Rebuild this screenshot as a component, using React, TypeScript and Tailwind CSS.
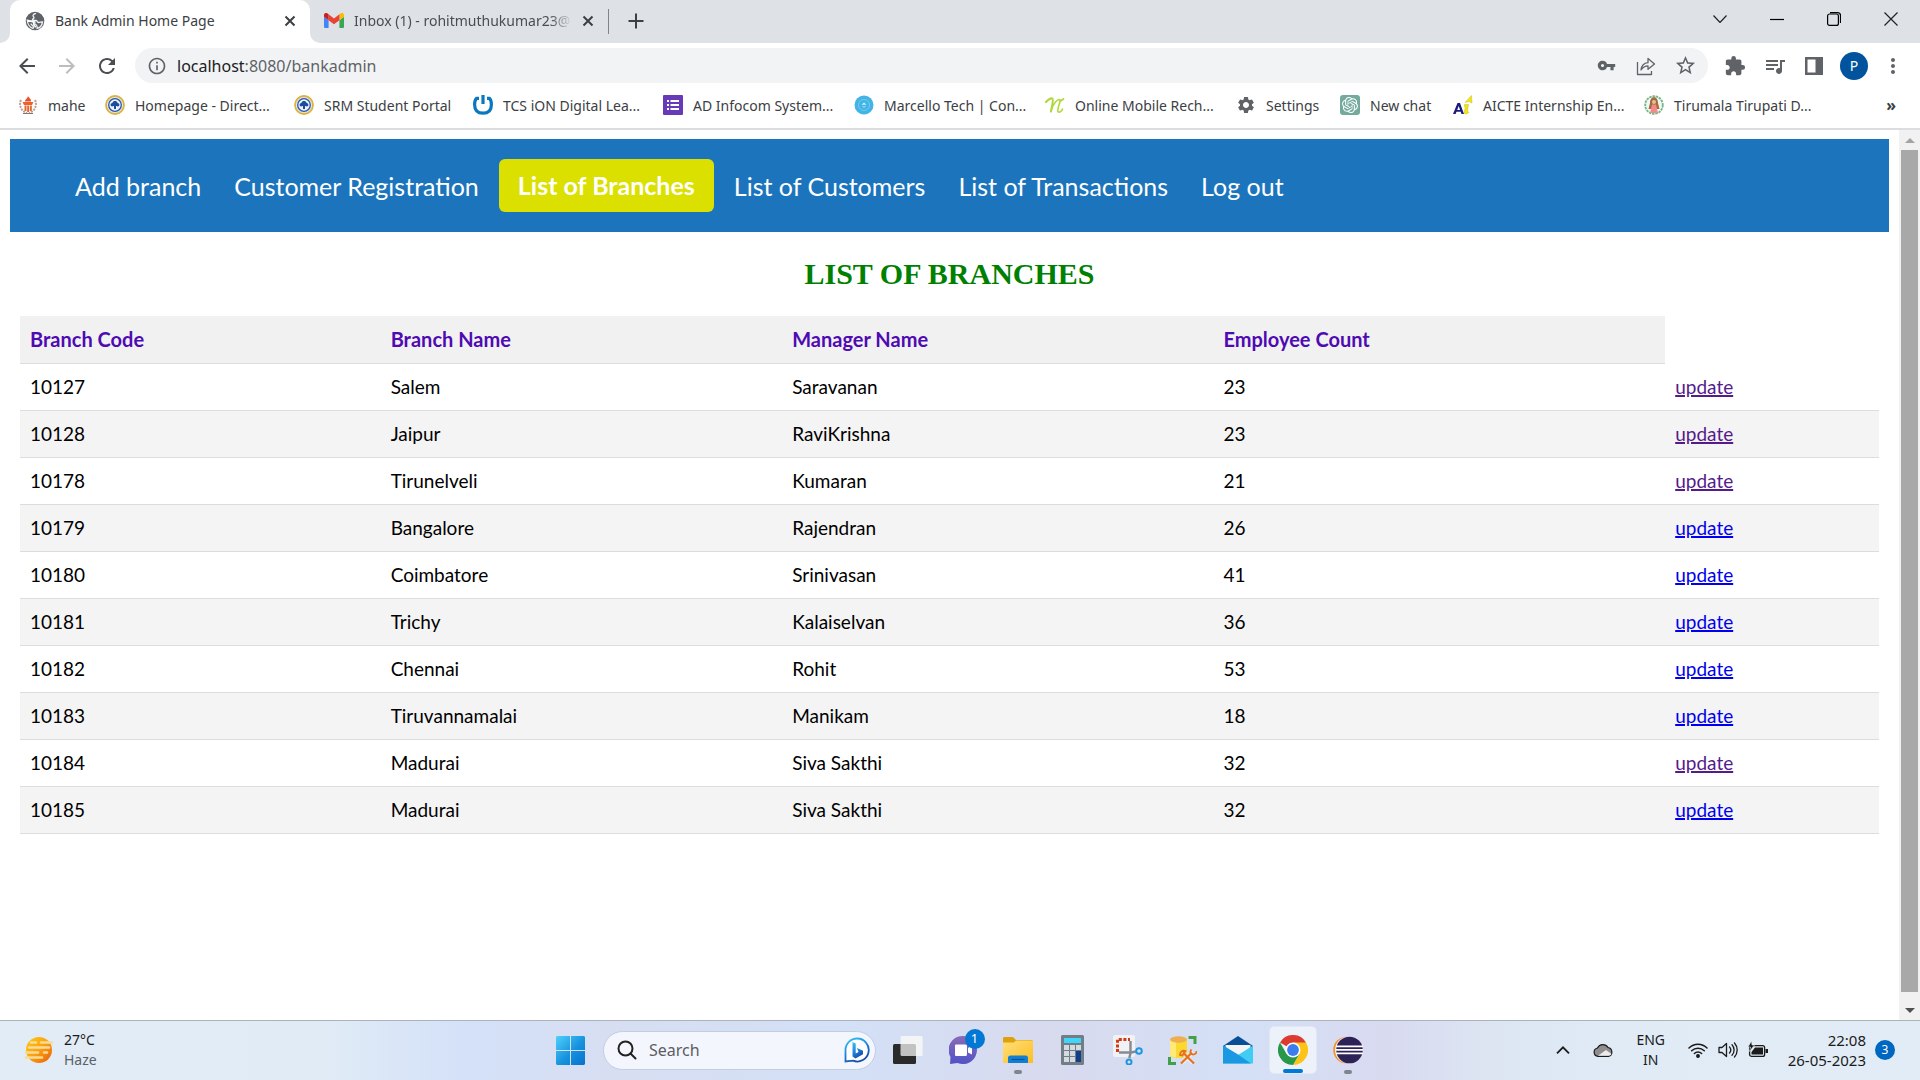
import type { ReactNode } from "react";
import {
  MdArrowBack,
  MdArrowForward,
  MdExtension,
  MdMoreVert,
  MdOutlineInfo,
  MdQueueMusic,
  MdRefresh,
  MdSettings,
  MdStarBorder,
  MdVpnKey,
} from "react-icons/md";
import { SiOpenai } from "react-icons/si";

/* ---------- Browser chrome ---------- */

function GlobeIcon() {
  return (
    <svg viewBox="0 0 20 20" className="size-5">
      <circle cx="10" cy="10" r="9.300" fill="#5f6368" />
      <path
        d="M11 2.200c-1 .6-2.800 1-3 2.300-.1 1 1 1.300 1 2.300 0 .8-1.500.8-1.500 1.700 0 1.200 2 .8 3.500 1 1.500.3 1.300 1.800 2.500 2 1.300.2 2.500-.8 4-.7-.4 3-2.500 5.800-5.300 6.600.4-1.200-.3-1.800-.5-2.700-.2-1-1.200-.8-1.700-1.700-.4-.8.300-1.500-.2-2.200C8.800 9.700 5 10.500 2.300 9.200 2.500 13 5 16.500 8 17.500c.8-.6.500-1.500.200-2.300-.4-1-2-1.200-2.300-2.500"
        fill="none"
        stroke="#f1f3f4"
        strokeWidth="1.300"
      />
      <path d="M11.500 3c2 .2 4.800 2.200 5.500 5-1.200.8-2.700.3-3.500-.5s-.5-1.700-1.500-2.300-1-1.500-.5-2.200z" fill="#5f6368" />
      <path d="M3 10c2 .5 4.500-.3 5.500 1.200.6 1-.2 1.800.5 2.800s1.500 1.200 1.300 2.500" fill="none" stroke="#fff" strokeWidth="1.600" />
    </svg>
  );
}

function GmailIcon() {
  return (
    <svg viewBox="0 0 24 18" className="w-5 h-[15px]">
      <path d="M1.6 18H5.5V8.7L0 4.6v11.8C0 17.3.7 18 1.6 18z" fill="#4285f4" />
      <path d="M18.5 18h3.9c.9 0 1.6-.7 1.6-1.6V4.6l-5.5 4.1z" fill="#34a853" />
      <path d="M18.5 1.6v7.1L24 4.6V2.4c0-2-2.300-3.200-3.900-2z" fill="#fbbc04" />
      <path d="M5.500 8.700V1.600L12 6.500l6.500-4.900v7.100L12 13.600z" fill="#ea4335" />
      <path d="M0 2.400v2.200l5.500 4.100V1.600L3.900.400C2.300-.8 0 .4 0 2.400z" fill="#c5221f" />
    </svg>
  );
}

function CrossIcon() {
  return (
    <svg viewBox="0 0 12 12" className="size-3" stroke="#3c4043" strokeWidth="2">
      <path d="M1.500 1.500l9 9M10.500 1.500l-9 9" />
    </svg>
  );
}

function TabStrip() {
  return (
    <header className="flex h-[43px] items-stretch bg-[#dee1e6]">
      <div className="flex w-[10px] bg-white">
        <div className="w-full rounded-br-[10px] bg-[#dee1e6]" />
      </div>
      <div className="flex w-[300px] items-center rounded-t-[10px] bg-white pl-[15px] pr-3 pb-[2px]">
        <GlobeIcon />
        <span className="ml-[10px] flex-1 whitespace-nowrap text-[14px] text-[#3c4043]">Bank Admin Home Page</span>
        <button aria-label="Close tab" className="p-[2px]">
          <CrossIcon />
        </button>
      </div>
      <div className="flex flex-1 bg-white">
        <div className="flex flex-1 rounded-bl-[10px] bg-[#dee1e6]">
          <div className="flex w-[298px] items-center pl-[14px] pr-3 pb-[2px]">
            <GmailIcon />
            <span className="ml-[10px] w-[218px] overflow-hidden whitespace-nowrap text-[14px] text-[#4a4d51] [mask-image:linear-gradient(to_right,black_90%,transparent)]">
              Inbox (1) - rohitmuthukumar23@
            </span>
            <button aria-label="Close tab" className="ml-auto p-[2px]">
              <CrossIcon />
            </button>
          </div>
          <div className="my-[9px] w-px bg-[#808387]" />
          <button aria-label="New tab" className="ml-[19px] self-center pb-[2px]">
            <svg viewBox="0 0 16 16" className="size-4" stroke="#3c4043" strokeWidth="2">
              <path d="M8 0.500v15M0.500 8h15" />
            </svg>
          </button>
          <div className="ml-auto flex items-center pr-px pb-[5px]">
            <button aria-label="Search tabs" className="flex w-[57px] justify-center">
              <svg viewBox="0 0 14 8" className="h-2 w-[14px]" fill="none" stroke="#202124" strokeWidth="1.200">
                <path d="M.5.500l6.500 7 6.500-7" />
              </svg>
            </button>
            <button aria-label="Minimize" className="flex w-[57px] justify-center">
              <svg viewBox="0 0 14 14" className="size-[14px]" stroke="#000" strokeWidth="1.200">
                <path d="M0 7.500h14" />
              </svg>
            </button>
            <button aria-label="Restore" className="flex w-[57px] justify-center">
              <svg viewBox="0 0 14 14" className="size-[14px]" fill="none" stroke="#000" strokeWidth="1.200">
                <rect x="0.600" y="2" width="10.800" height="11.400" rx="2" />
                <path d="M3 .600h7.500a3 3 0 0 1 3 3V11" />
              </svg>
            </button>
            <button aria-label="Close window" className="flex w-[57px] justify-center">
              <svg viewBox="0 0 14 14" className="size-[14px]" stroke="#202124" strokeWidth="1.200">
                <path d="M.5.500l13 13M13.500.500l-13 13" />
              </svg>
            </button>
          </div>
        </div>
      </div>
    </header>
  );
}

function Toolbar() {
  return (
    <div className="flex h-[45px] items-center bg-white px-[15px] text-[#5f6368]">
      <button aria-label="Back">
        <MdArrowBack className="size-6 text-[#4a4d51]" />
      </button>
      <button aria-label="Forward" className="ml-4">
        <MdArrowForward className="size-6 text-[#bbbdbf]" />
      </button>
      <button aria-label="Reload" className="ml-4">
        <MdRefresh className="size-6 text-[#4a4d51]" />
      </button>
      <div className="ml-4 flex h-[35px] flex-1 items-center rounded-full bg-[#f1f3f4] pl-3 pr-[11px]">
        <MdOutlineInfo className="size-5" />
        <div className="relative ml-[10px] flex-1 text-[16px]">
          <input
            aria-label="Address"
            defaultValue="localhost:8080/bankadmin"
            className="w-full bg-transparent text-transparent caret-black outline-none"
          />
          <div aria-hidden="true" className="pointer-events-none absolute inset-0">
            <span className="text-[#202124]">localhost</span>:8080/bankadmin
          </div>
        </div>
        <button aria-label="Passwords">
          <MdVpnKey className="size-[19px]" />
        </button>
        <button aria-label="Share" className="ml-5">
          <svg viewBox="0 0 20 20" className="size-5" fill="none" stroke="#5f6368" strokeWidth="1.300" strokeLinejoin="round">
            <path d="M1.500 6v12.500h14V15" />
            <path d="M5 14c.6-4.500 3-7 7-7.300V2.500L18.500 8 12 13.300V9.800C9 9.800 6.800 11 5 14z" />
          </svg>
        </button>
        <button aria-label="Bookmark" className="ml-[18px]">
          <MdStarBorder className="size-[23px]" />
        </button>
      </div>
      <button aria-label="Extensions" className="ml-4">
        <MdExtension className="size-[22px]" />
      </button>
      <button aria-label="Media" className="ml-[17px]">
        <MdQueueMusic className="size-6" />
      </button>
      <button aria-label="Side panel" className="ml-[18px]">
        <svg viewBox="0 0 18 18" className="size-[18px]">
          <path fill="#5f6368" fillRule="evenodd" d="M0 0h18v18H0zM2.500 2.500v13h8v-13z" />
        </svg>
      </button>
      <button aria-label="Profile" className="ml-[17px] size-[28px] rounded-full bg-[#00539c] text-[14px] text-white">
        P
      </button>
      <button aria-label="Menu" className="ml-[13px]">
        <MdMoreVert className="size-6" />
      </button>
    </div>
  );
}

function MaheIcon() {
  return (
    <svg viewBox="0 0 20 20" className="size-5">
      <path d="M3 5c-2.500 5 0 11 6 13M17 5c2.500 5 0 11-6 13" fill="none" stroke="#b9a08f" strokeWidth="2" strokeDasharray="2 1" />
      <path d="M4.500 7h11l-1.500 3H6zM6.500 10.500h2V16h-2zM9.200 10.500h1.800V17H9.200zM11.800 10.500h2V16h-2z" fill="#e8642c" />
      <path d="M7 6.500C7 4 9 4.500 10 1c1 2 3.500 3 3 5.500z" fill="#e8542c" />
      <path d="M5 18.500h10" stroke="#8a7468" />
    </svg>
  );
}

function SrmIcon() {
  return (
    <svg viewBox="0 0 20 20" className="size-5">
      <circle cx="10" cy="10" r="9" fill="#dfe8f5" stroke="#dcb33c" strokeWidth="1.800" />
      <circle cx="10" cy="10" r="6.300" fill="#eef3fa" stroke="#2a56a5" strokeWidth="1.300" />
      <path d="M5.700 10.500c-.5-1.500.5-2.500 1.700-2.500.3-1.500 1.500-2 2.600-2s2.300.5 2.600 2c1.200 0 2.200 1 1.700 2.500-.8 1.200-2 1-2.800.4h-3c-.8.600-2 .8-2.800-.4zM9 10.500h2v3.500H9z" fill="#1d4b9e" />
    </svg>
  );
}

function PowerIcon() {
  return (
    <svg viewBox="0 0 20 20" className="size-5" fill="none" stroke="#0a78bf" strokeWidth="3.200">
      <path d="M6 3.300H3.500C1.800 5 1.600 7 1.600 9.500c0 6 3 8.700 8.400 8.700s8.400-2.700 8.400-8.700c0-2.500-.2-4.500-1.900-6.200H14" />
      <path d="M10 0v9" />
    </svg>
  );
}

function ListIcon() {
  return (
    <svg viewBox="0 0 20 20" className="size-5">
      <rect width="20" height="20" rx="1" fill="#673ab7" />
      <path d="M4 5h2v2H4zM4 9h2v2H4zM4 13h2v2H4zM7.500 5H16v2H7.500zM7.500 9H16v2H7.500zM7.500 13H16v2H7.500z" fill="#fff" />
    </svg>
  );
}

function MarcelloIcon() {
  return (
    <svg viewBox="0 0 20 20" className="size-5">
      <circle cx="10" cy="10" r="9.500" fill="#42b4e6" />
      <circle cx="10" cy="10" r="5.500" fill="none" stroke="#7fcdef" strokeWidth=".8" />
      <path d="M10 7.500l2.500 2.300h-5zM8.500 11.500h3v.8h-3z" fill="#d5f0fb" />
    </svg>
  );
}

function MobileIcon() {
  return (
    <svg viewBox="0 0 20 20" className="size-5" fill="none" stroke="#b0d83c" strokeLinecap="round">
      <path d="M1 7C4 4 6.500 3 7.500 3.700S7.500 9 6 16.500" strokeWidth="2.200" />
      <path d="M6.500 14C8.500 8.500 12 4.500 14.500 4.500s-3 9.500-1.500 12c1.300 1.800 4-.5 4.500-2.500" strokeWidth="1.600" />
      <path d="M15.500 6L18.500 4" strokeWidth="1.800" />
    </svg>
  );
}

function AicteIcon() {
  return (
    <svg viewBox="0 0 20 20" className="size-5">
      <path fillRule="evenodd" d="M0 19L4.500 8h2.500l4 11H8.500l-.8-2.300H3.500L2.600 19zM4.200 15h2.900l-1.400-4z" fill="#1b1b7a" />
      <path d="M12 7.500L18.500.5 19 8l-3-1.500z" fill="#f5e50a" stroke="#b8ad1a" strokeWidth=".4" />
      <path d="M11.500 9.500h4L14.500 16l1.500 1.500-3 1.500c-2 0-2-1-1.500-3l.8-4.500h-1z" fill="#f5e50a" stroke="#b8ad1a" strokeWidth=".4" />
    </svg>
  );
}

function TirumalaIcon() {
  return (
    <svg viewBox="0 0 20 20" className="size-5">
      <circle cx="10" cy="10" r="8.800" fill="#f3f7f1" stroke="#74b58a" strokeWidth="1.800" strokeDasharray="2.500 .8" />
      <path d="M6 8c0-4 2-5.500 4-6 2 .5 4 2 4 6l1.500 6h-11z" fill="#a36a45" />
      <circle cx="10" cy="7" r="2" fill="#e9c08c" />
      <path d="M8 9.500h4L14 18H6z" fill="#f28a8a" />
    </svg>
  );
}

function BookmarksBar() {
  return (
    <nav
      aria-label="Bookmarks"
      className="flex h-[42px] items-center overflow-hidden border-b-2 border-[#dcdde0] bg-white pb-[6px] pl-[18px] pr-[24px] text-[14px] text-[#3c4043]"
    >
      <Bookmark width="w-[87px]" icon={<MaheIcon />} label="mahe" />
      <Bookmark width="w-[189px]" icon={<SrmIcon />} label="Homepage - Direct..." />
      <Bookmark width="w-[179px]" icon={<SrmIcon />} label="SRM Student Portal" />
      <Bookmark width="w-[190px]" icon={<PowerIcon />} label="TCS iON Digital Lea..." />
      <Bookmark width="w-[191px]" icon={<ListIcon />} label="AD Infocom System..." />
      <Bookmark width="w-[191px]" icon={<MarcelloIcon />} label="Marcello Tech | Con..." />
      <Bookmark width="w-[191px]" icon={<MobileIcon />} label="Online Mobile Rech..." />
      <Bookmark width="w-[104px]" icon={<MdSettings className="size-5 text-[#5f6368]" />} label="Settings" />
      <Bookmark
        width="w-[113px]"
        icon={
          <span className="flex size-5 items-center justify-center rounded-[3px] bg-[#74aa9c] text-white">
            <SiOpenai className="size-4" />
          </span>
        }
        label="New chat"
      />
      <Bookmark width="w-[191px]" icon={<AicteIcon />} label="AICTE Internship En..." />
      <Bookmark width="w-[180px]" icon={<TirumalaIcon />} label="Tirumala Tirupati D..." />
      <button aria-label="More bookmarks" className="ml-auto text-[16px] font-bold">
        »
      </button>
    </nav>
  );
}

function Bookmark({ width, icon, label }: { width: string; icon: ReactNode; label: string }) {
  return (
    <a href="#" className={`flex shrink-0 items-center gap-[10px] whitespace-nowrap ${width}`}>
      <span className="shrink-0">{icon}</span>
      {label}
    </a>
  );
}

/* ---------- Bank admin page ---------- */

const menu = [
  "Add branch",
  "Customer Registration",
  "List of Branches",
  "List of Customers",
  "List of Transactions",
  "Log out",
];

const branches = [
  { code: "10127", name: "Salem", manager: "Saravanan", count: 23, visited: true },
  { code: "10128", name: "Jaipur", manager: "RaviKrishna", count: 23, visited: true },
  { code: "10178", name: "Tirunelveli", manager: "Kumaran", count: 21, visited: true },
  { code: "10179", name: "Bangalore", manager: "Rajendran", count: 26, visited: false },
  { code: "10180", name: "Coimbatore", manager: "Srinivasan", count: 41, visited: false },
  { code: "10181", name: "Trichy", manager: "Kalaiselvan", count: 36, visited: false },
  { code: "10182", name: "Chennai", manager: "Rohit", count: 53, visited: false },
  { code: "10183", name: "Tiruvannamalai", manager: "Manikam", count: 18, visited: false },
  { code: "10184", name: "Madurai", manager: "Siva Sakthi", count: 32, visited: true },
  { code: "10185", name: "Madurai", manager: "Siva Sakthi", count: 32, visited: false },
];

function AdminPage() {
  return (
    <main className="flex-1 bg-white p-[10px] pt-[9px] font-[Lato,sans-serif]">
      <nav className="flex items-center gap-px bg-[#1c75bc] px-[49px] py-5 text-[25px] leading-[37px] text-white">
        {menu.map((item) =>
          item === "List of Branches" ? (
            <a key={item} href="#" className="mx-[3px] rounded-[6px] bg-[#dbe000] px-[19px] py-2 font-bold">
              {item}
            </a>
          ) : (
            <a key={item} href="#" className="px-4 pt-[9px] pb-[7px]">
              {item}
            </a>
          ),
        )}
      </nav>
      <h1 className="mt-6 text-center font-['Liberation_Serif',serif] text-[30px] leading-[36px] font-bold text-[#008000]">
        LIST OF BRANCHES
      </h1>
      <div className="mt-6 px-[10px]">
        <table className="w-full table-fixed border-collapse text-left text-[19px] leading-[30px] text-black">
          <colgroup>
            <col className="w-[19.4%]" />
            <col className="w-[21.6%]" />
            <col className="w-[23.2%]" />
            <col className="w-[24.3%]" />
            <col />
          </colgroup>
          <thead>
            <tr className="text-[20px] text-[#4f0ab3]">
              {["Branch Code", "Branch Name", "Manager Name", "Employee Count"].map((h) => (
                <th key={h} className="border-b border-[#dddddd] bg-[#f1f1f1] px-[10px] pt-2 pb-[9px] font-bold">
                  {h}
                </th>
              ))}
            </tr>
          </thead>
          <tbody>
            {branches.map((b) => (
              <tr key={b.code} className="border-b border-[#dddddd] even:bg-[#f4f4f4]">
                <td className="px-[10px] py-2">{b.code}</td>
                <td className="px-[10px] py-2">{b.name}</td>
                <td className="px-[10px] py-2">{b.manager}</td>
                <td className="px-[10px] py-2">{b.count}</td>
                <td className="px-[10px] py-2">
                  <a href="#" className={b.visited ? "text-[#551a8b] underline decoration-2" : "text-[#0000ee] underline decoration-2"}>
                    update
                  </a>
                </td>
              </tr>
            ))}
          </tbody>
        </table>
      </div>
    </main>
  );
}

function ScrollBar() {
  return (
    <div className="flex w-[21px] flex-col items-center bg-[#f1f1f1] px-[2px]">
      <span className="flex h-5 items-center">
        <svg viewBox="0 0 10 5" className="h-[5px] w-[10px]">
          <path d="M0 5l5-5 5 5z" fill="#a3a3a3" />
        </svg>
      </span>
      <span className="w-full flex-1 bg-[#a8a8a8]" />
      <span className="flex h-[28px] items-center pt-2">
        <svg viewBox="0 0 10 5" className="h-[5px] w-[10px]">
          <path d="M0 0l5 5 5-5z" fill="#505050" />
        </svg>
      </span>
    </div>
  );
}

/* ---------- Taskbar ---------- */

function TaskButton({ label, running, active, children }: { label: string; running?: boolean; active?: boolean; children: ReactNode }) {
  return (
    <button aria-label={label} className="flex w-[55px] justify-center">
      <span
        className={
          active
            ? "relative flex size-12 items-center justify-center rounded-[5px] border border-[#e1e7f5] bg-[#ecf1fa]"
            : "relative flex size-12 items-center justify-center"
        }
      >
        {children}
        {active && <span className="absolute bottom-0 h-1 w-5 rounded-full bg-[#0078d4]" />}
        {running && <span className="absolute bottom-0 h-1 w-2 rounded-full bg-[#80848d]" />}
      </span>
    </button>
  );
}

function Taskbar() {
  return (
    <footer className="grid h-[60px] grid-cols-[1fr_auto_1fr] items-center border-t border-[#adb3bd] bg-[linear-gradient(90deg,#e1ecf6_0%,#e0ebf6_17%,#d4e1f8_24%,#d7def2_32%,#d3e0f6_44%,#d8daee_55%,#d4e0f6_65%,#d8daf0_72%,#dce4f2_77%,#e0ebf6_84%,#e1ecf6_100%)] pb-px font-['Noto_Sans',sans-serif]">
      <div className="flex items-center pl-6 text-[14px] leading-5">
        <svg viewBox="0 0 30 30" className="size-[30px]">
          <defs>
            <linearGradient id="sun" x1="0" y1="0" x2="1" y2="1">
              <stop offset="0" stopColor="#ffcb0a" />
              <stop offset=".5" stopColor="#fba012" />
              <stop offset="1" stopColor="#ea5a08" />
            </linearGradient>
          </defs>
          <circle cx="15" cy="15" r="13" fill="url(#sun)" />
          <g stroke="#f7dc97" strokeWidth="2.600" strokeLinecap="round">
            <path d="M7 7.500h5M17 7.500h11M5 12.500h20M2 17.500h12M20 17.500h3M2 22.500h16" />
          </g>
        </svg>
        <div className="ml-[10px]">
          <div className="text-[#1b1b1b]">27°C</div>
          <div className="text-[#5a6068]">Haze</div>
        </div>
      </div>

      <div className="flex items-center pr-[2px]">
        <button aria-label="Start" className="flex w-[55px] justify-center">
          <svg viewBox="0 0 29 29" className="size-[29px]">
            <defs>
              <linearGradient id="win" x1="0" y1="0" x2="1" y2="1">
                <stop offset="0" stopColor="#4fd0fb" />
                <stop offset=".55" stopColor="#1792dd" />
                <stop offset="1" stopColor="#0670cf" />
              </linearGradient>
            </defs>
            <path d="M1 0h13v14H0V1zM15 0h13l1 1v13H15zM0 15h14v14H1l-1-1zM15 15h14v13l-1 1H15z" fill="url(#win)" />
          </svg>
        </button>
        <label className="ml-[5px] mr-[4px] flex h-[39px] w-[273px] items-center rounded-full border border-[#c3cde2] bg-[#f3f6fd] pl-[13px] pr-[5px]">
          <svg viewBox="0 0 20 20" className="size-5" fill="none" stroke="#222" strokeWidth="2" strokeLinecap="round">
            <circle cx="8.500" cy="8.500" r="7" />
            <path d="M13.500 13.500l5 5" />
          </svg>
          <input aria-label="Search" placeholder="Search" className="ml-3 min-w-0 flex-1 bg-transparent text-[16px] outline-none placeholder:text-[#5b5d63]" />
          <svg viewBox="0 0 26 26" className="size-[26px]">
            <defs>
              <linearGradient id="bing" x1="0" y1="0" x2=".5" y2="1">
                <stop offset="0" stopColor="#35c8f3" />
                <stop offset=".6" stopColor="#1b7fdc" />
                <stop offset="1" stopColor="#1a4ca8" />
              </linearGradient>
            </defs>
            <path d="M13 1.500a11.500 11.500 0 1 1-4 22.200L1.500 24.500V13A11.500 11.500 0 0 1 13 1.500z" fill="#fff" stroke="url(#bing)" strokeWidth="1.800" />
            <path d="M8.500 5l3.200 1.500v10l2.800-1.600-1.500-3.800 6 2.600v3.500L11.500 21.500l-3-2z" fill="url(#bing)" />
          </svg>
        </label>

        <TaskButton label="Task view">
          <svg viewBox="0 0 30 28" className="h-7 w-[30px]">
            <rect x="0" y="8" width="23" height="20" rx="1.500" fill="#2a2a2a" />
            <rect x="7.500" y="0" width="22" height="20" rx="1.500" fill="#f5f5f5" opacity=".75" />
            <path d="M23 1h6.500v19H23zM8 0h21v8H8z" fill="#f5f5f5" opacity=".7" />
          </svg>
        </TaskButton>
        <TaskButton label="Chat">
          <svg viewBox="0 0 28 28" className="size-7">
            <defs>
              <linearGradient id="chat" x1="0" y1="0" x2="0" y2="1">
                <stop offset="0" stopColor="#8a6bb5" />
                <stop offset="1" stopColor="#5053c8" />
              </linearGradient>
            </defs>
            <path d="M14 0a14 14 0 1 1-5.500 26.900L1 28l.5-7A14 14 0 0 1 14 0z" fill="url(#chat)" />
            <path d="M7 8.500h9.500a1.500 1.500 0 0 1 1.500 1.500v8.500a1.500 1.500 0 0 1-1.500 1.500H7A1 1 0 0 1 6 19V9.500a1 1 0 0 1 1-1zM19 12l4-2.500v9L19 16.500z" fill="#fff" />
          </svg>
          <span className="absolute right-[2px] top-[3px] flex size-5 items-center justify-center rounded-full bg-[#0078d4] text-[13px] text-white">1</span>
        </TaskButton>
        <TaskButton label="File Explorer" running>
          <svg viewBox="0 0 30 27" className="h-[27px] w-[30px]">
            <defs>
              <linearGradient id="folder" x1="0" y1="0" x2="1" y2="1">
                <stop offset="0" stopColor="#ffe07a" />
                <stop offset="1" stopColor="#fdbd22" />
              </linearGradient>
            </defs>
            <path d="M0 1.500C0 .6.600 0 1.500 0H10l3 3h15.500c1 0 1.500.6 1.500 1.500V10H0z" fill="#dfa00c" />
            <path d="M0 5.500h11l2-2h17V26H0z" fill="url(#folder)" />
            <path d="M5 26v-5c0-1.500.8-2.500 2.500-2.500h15c1.700 0 2.500 1 2.500 2.500v5z" fill="#1180d2" />
            <path d="M8.500 22.500h13" stroke="#0a4f93" strokeWidth="1.200" />
          </svg>
        </TaskButton>
        <TaskButton label="Calculator">
          <svg viewBox="0 0 23 30" className="h-[30px] w-[23px]">
            <rect width="23" height="30" rx="1.500" fill="#717d87" />
            <rect x="3" y="3" width="17" height="5" fill="#40d6f7" />
            <g fill="#d3dbe0">
              <path d="M3 10h5v5H3zM9 10h5v5H9zM15 10h5v5h-5zM3 16h5v5H3zM9 16h5v5H9zM3 22h5v5H3zM9 22h5v5H9z" />
            </g>
            <path d="M15 16h5v11h-5z" fill="#123f86" />
          </svg>
        </TaskButton>
        <TaskButton label="Snipping Tool">
          <svg viewBox="0 0 30 30" className="size-[30px]">
            <rect width="22" height="22" rx="2" fill="#f0f2f5" />
            <path d="M4.500 17V4.500H17" fill="none" stroke="#d13a12" strokeWidth="3" strokeDasharray="3 1.600" />
            <path d="M17.500 6v12l-1.200 5M6 17.500h12l5-1" fill="none" stroke="#868b92" strokeWidth="2.400" />
            <g fill="none" stroke="#1f97dc" strokeWidth="2">
              <circle cx="26" cy="16" r="2.800" />
              <circle cx="16" cy="27" r="2.500" />
            </g>
          </svg>
        </TaskButton>
        <TaskButton label="Database Tools">
          <svg viewBox="0 0 29 29" className="size-[29px]">
            <path d="M2 3.500h17V19c0 1.700-4 3-8.500 3S2 20.700 2 19z" fill="#fbd92e" />
            <path d="M2 3.500h6v18c-3.500-.5-6-1.300-6-2.500z" fill="#fdea7a" />
            <ellipse cx="10.500" cy="3.500" rx="8.500" ry="3.300" fill="#efae4f" />
            <path d="M20.500 1.500H27V8M1.500 21v6.500H8" fill="none" stroke="#43a047" strokeWidth="3" />
            <path d="M14 27l11-11M14 16l11 11" stroke="#fff" strokeWidth="4" opacity=".5" />
            <path d="M13 27.500l11-11M15 16.500l11 11" stroke="#e8711c" strokeWidth="2.200" />
            <path d="M12 19c0-3 2.500-5 5.500-4l-3 4.500zM23.500 13.500c-2 2-1 5 1.500 5s3.500-1.500 3.500-3.500" fill="none" stroke="#e8711c" strokeWidth="1.800" />
          </svg>
        </TaskButton>
        <TaskButton label="Mail">
          <svg viewBox="0 0 30 28" className="h-7 w-[30px]">
            <path d="M0 10L15 0l15 10v6H0z" fill="#0a4f96" />
            <path d="M2.500 9h25v10h-25z" fill="#f2f4f6" />
            <path d="M0 9.500v18h30v-18L15 19z" fill="#41cdf3" />
            <path d="M0 9.500v18h28L15 18.500z" fill="#1b98e2" />
          </svg>
        </TaskButton>
        <TaskButton label="Google Chrome" active>
          <svg viewBox="0 0 30 30" className="size-[30px]">
            <path d="M15 15L2 7.500A15 15 0 0 1 28 7.500z" fill="#dd3b2f" />
            <path d="M15 7.500h13A15 15 0 0 1 15 30l6.500-11.300z" fill="#fcc417" />
            <path d="M2 7.500L8.500 18.800 21.500 18.700 15 30A15 15 0 0 1 2 7.500z" fill="#27984a" />
            <circle cx="15" cy="15" r="7.500" fill="#fff" />
            <circle cx="15" cy="15" r="5.900" fill="#3b7ded" />
          </svg>
        </TaskButton>
        <TaskButton label="Eclipse" running>
          <svg viewBox="0 0 30 28" className="h-7 w-[30px]">
            <circle cx="13.500" cy="14" r="13.300" fill="#f7941e" />
            <circle cx="15.500" cy="14" r="13.500" fill="#e9e8f5" />
            <circle cx="16.500" cy="14" r="13.300" fill="#2c2255" />
            <path d="M3 9.500h27v1.800H3zM2.500 13h27.500v1.800H2.500zM3 16.500h27v1.800H3z" fill="#fff" />
          </svg>
        </TaskButton>
      </div>

      <div className="flex items-center justify-end pr-[25px] text-[15px] leading-5 text-[#1b1b1b]">
        <button aria-label="Show hidden icons">
          <svg viewBox="0 0 14 8" className="h-2 w-[14px]" fill="none" stroke="#1b1b1b" strokeWidth="1.800">
            <path d="M1 7.300l6-6 6 6" />
          </svg>
        </button>
        <svg viewBox="0 0 20 14" className="ml-[23px] h-[14px] w-5">
          <path d="M5 13.300a4.200 4.200 0 0 1-.5-8.300A6 6 0 0 1 15 4.500a4.500 4.500 0 0 1 .5 8.800z" fill="#8e8e8e" stroke="#1b1b1b" strokeWidth="1.200" />
          <path d="M5 12.700L13 7l5.500 4c-.6 1-1.500 1.700-3 1.700z" fill="#ececec" />
        </svg>
        <button className="ml-[22px] w-[32px] text-center text-[14px]">
          ENG
          <br />
          IN
        </button>
        <svg viewBox="0 0 20 16" className="ml-[21px] h-4 w-5" fill="none" stroke="#1b1b1b" strokeWidth="1.500" strokeLinecap="round">
          <path d="M1 6a12.700 12.700 0 0 1 18 0M3.700 8.800a9 9 0 0 1 12.600 0M6.400 11.500a5.100 5.100 0 0 1 7.200 0" />
          <circle cx="10" cy="14" r="1.200" fill="#1b1b1b" />
        </svg>
        <svg viewBox="0 0 20 18" className="ml-[10px] h-[18px] w-5" fill="none" stroke="#1b1b1b" strokeWidth="1.300" strokeLinejoin="round" strokeLinecap="round">
          <path d="M1 6.500h3L8.500 2.500v13L4 11.500H1zM11.500 6a4.500 4.500 0 0 1 0 6M14 3.800a7.500 7.500 0 0 1 0 10.400M16.500 2a10.500 10.500 0 0 1 0 14" />
        </svg>
        <svg viewBox="0 0 20 18" className="ml-[10px] h-[18px] w-5">
          <rect x="1.600" y="4.600" width="15" height="10.800" rx="2" fill="none" stroke="#1b1b1b" strokeWidth="1.300" />
          <path d="M7 6.500h8v7H3.500V11zM17.500 8H20v4h-2.500z" fill="#1b1b1b" />
          <path d="M3.500 0L0 6h2.500L1.500 10.500 6.500 4H4z" fill="#1b1b1b" stroke="#e1ecf6" strokeWidth=".6" />
        </svg>
        <div className="ml-5 min-w-[78px] whitespace-nowrap text-right">
          22:08
          <br />
          26-05-2023
        </div>
        <span className="ml-[9px] flex size-5 items-center justify-center rounded-full bg-[#0067c0] text-[12px] text-white">3</span>
      </div>
    </footer>
  );
}

export default function App() {
  return (
    <div className="flex min-h-screen flex-col bg-white font-['Noto_Sans',sans-serif]">
      <TabStrip />
      <Toolbar />
      <BookmarksBar />
      <div className="flex flex-1 items-stretch">
        <AdminPage />
        <ScrollBar />
      </div>
      <Taskbar />
    </div>
  );
}
